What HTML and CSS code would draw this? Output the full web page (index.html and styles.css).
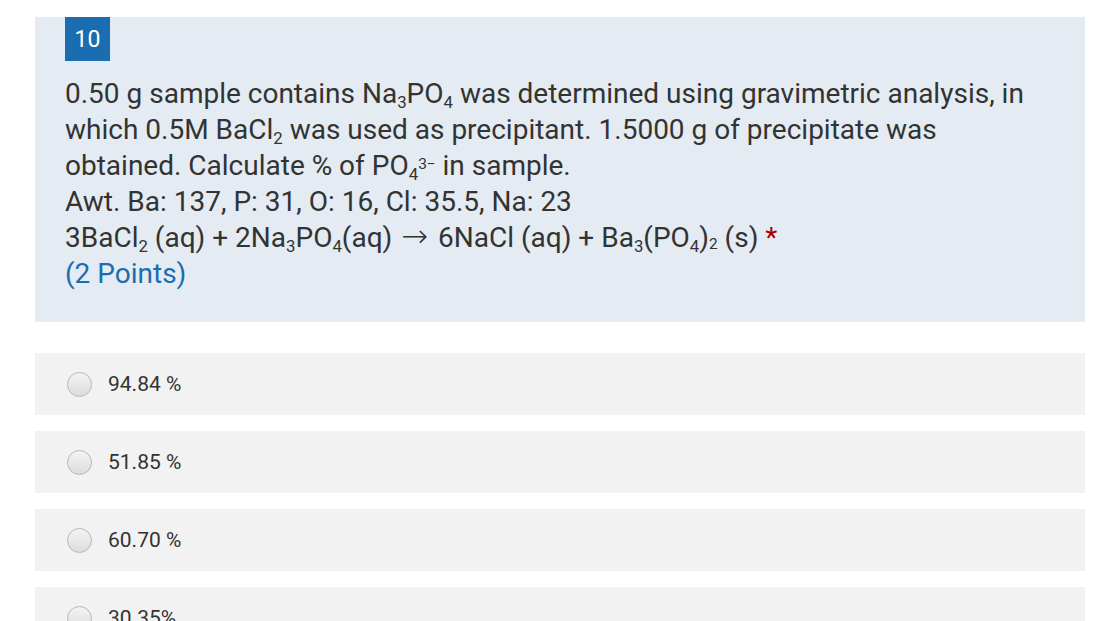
FILE: index.html
```html
<!DOCTYPE html>
<html>
<head>
<meta charset="utf-8">
<link rel="stylesheet" href="styles.css">
</head>
<body>
<div class="page">
  <section class="question">
    <div class="badge">10</div>
    <div class="qtext">
      0.50 g sample contains Na<sub>3</sub>PO<sub>4</sub> was determined using gravimetric analysis, in<br>
      which 0.5M BaCl<sub>2</sub> was used as precipitant. 1.5000 g of precipitate was<br>
      obtained. Calculate % of PO<sub>4</sub><sup>3−</sup> in sample.<br>
      Awt. Ba: 137, P: 31, O: 16, Cl: 35.5, Na: 23<br>
      3BaCl<sub>2</sub> (aq) + 2Na<sub>3</sub>PO<sub>4</sub>(aq) <span class="arrow">→</span> 6NaCl (aq) + Ba<sub>3</sub>(PO<sub>4</sub>)<sub class="small">2</sub> (s) <span class="req">*</span><br>
      <span class="points">(2 Points)</span>
    </div>
  </section>
  <div class="options">
    <label class="option"><span class="radio"></span><span class="otext">94.84 %</span></label>
    <label class="option"><span class="radio"></span><span class="otext">51.85 %</span></label>
    <label class="option"><span class="radio"></span><span class="otext">60.70 %</span></label>
    <label class="option"><span class="radio"></span><span class="otext">30.35%</span></label>
  </div>
</div>
</body>
</html>
```

FILE: styles.css
```css
html, body {
  margin: 0;
  padding: 0;
  background: #ffffff;
  overflow: hidden;
}
body {
  font-family: Roboto, "Liberation Sans", sans-serif;
  color: #333333;
}
.page {
  padding: 17px 28px 0 35px;
}
.question {
  background: #e4ebf2;
  padding: 0 30px 30px 30px;
}
.badge {
  display: inline-flex;
  align-items: center;
  justify-content: center;
  width: 45px;
  height: 44px;
  background: #1b6db1;
  color: #ffffff;
  font-size: 23px;
}
.qtext {
  margin-top: 15px;
  font-size: 28px;
  line-height: 36px;
  color: #333333;
}
.qtext sub {
  font-size: 0.6em;
  line-height: 0;
  vertical-align: -0.28em;
}
.qtext sub.small {
  font-size: 0.55em;
  vertical-align: -0.15em;
}
.qtext sup {
  font-size: 0.55em;
  line-height: 0;
  vertical-align: 0.4em;
}
.arrow {
  font-family: "DejaVu Sans", sans-serif;
  font-weight: 200;
  font-size: 32px;
  line-height: 0;
  margin: 0 3px 0 2px;
}
.req {
  color: #a80000;
}
.points {
  color: #1b6db1;
}
.options {
  margin-top: 31px;
  display: flex;
  flex-direction: column;
  gap: 16px;
}
.option {
  display: flex;
  align-items: center;
  height: 62px;
  background: #f2f2f2;
  padding-left: 32px;
}
.radio {
  width: 23px;
  height: 23px;
  border-radius: 50%;
  border: 1px solid #b8b8b8;
  background: linear-gradient(#f4f4f4, #dcdcdc);
  flex: none;
}
.otext {
  margin-left: 16px;
  font-size: 21px;
  color: #333333;
}
```
